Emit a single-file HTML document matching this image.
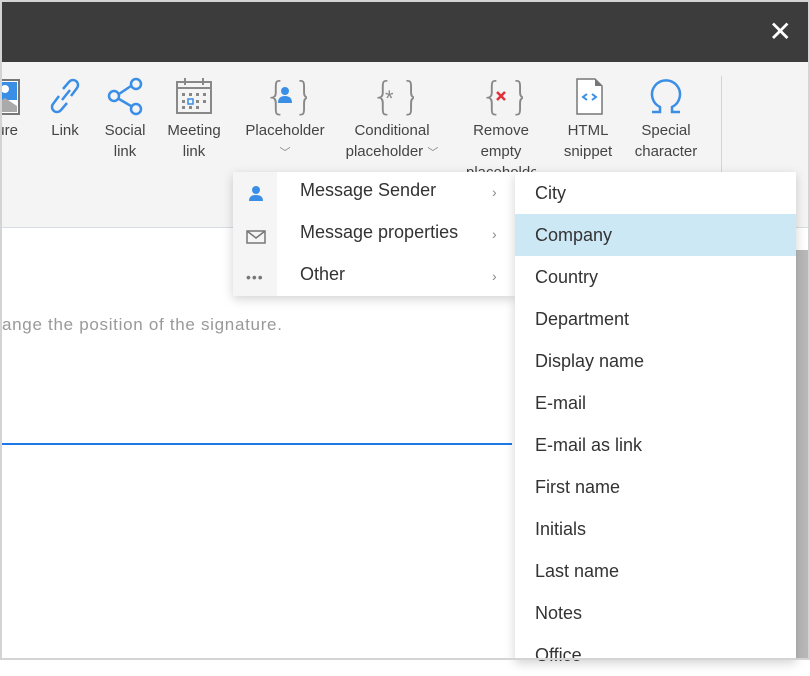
<!DOCTYPE html>
<html><head><style>
*{margin:0;padding:0;box-sizing:border-box}
body{width:810px;height:660px;overflow:hidden;background:#fff;font-family:"Segoe UI","Liberation Sans",sans-serif;position:relative}
.frame{position:absolute;inset:0;border:2px solid #d4d4d4;z-index:50;pointer-events:none}
.hdr{position:absolute;left:0;top:0;width:810px;height:62px;background:#3c3c3c}
.x{position:absolute;right:18px;top:15px;color:#fff;font-size:28px;font-weight:bold;font-family:"DejaVu Sans",sans-serif}
.tb{position:absolute;left:0;top:62px;width:810px;height:166px;background:#f4f4f4;border-bottom:1px solid #d8dde3}
.b{position:absolute;top:0;text-align:center;font-size:15px;color:#444;line-height:21px}
.b svg{display:block;margin:14px auto 4px}
.sep{position:absolute;left:721px;top:14px;width:1px;height:160px;background:#d0d6de}
.txt{position:absolute;left:2px;top:315px;font-size:17px;letter-spacing:0.7px;color:#999}
.line{position:absolute;left:2px;top:443px;width:510px;height:2px;background:#1e78e6}
.m1{position:absolute;left:233px;top:172px;width:282px;height:124px;background:#fff;box-shadow:0 3px 10px rgba(0,0,0,.18)}
.m1 .ic{position:absolute;left:0;top:0;width:44px;height:124px;background:#f5f5f5}
.it{position:absolute;left:67px;font-size:18px;color:#333}
.ar{position:absolute;left:259px;font-size:14px;color:#888}
.m2{position:absolute;left:515px;top:172px;width:281px;height:488px;background:#fff;box-shadow:0 3px 10px rgba(0,0,0,.18)}
.m2 div{height:42px;line-height:42px;padding-left:20px;font-size:18px;color:#333}
.sb{position:absolute;left:796px;top:250px;width:12px;height:410px;background:#b8b8b8}
.br{font-family:"DejaVu Sans",sans-serif;font-weight:200}
</style></head><body>
<div class="hdr"><div class="x">✕</div></div>
<div class="tb">
 <div class="b" style="left:-20px;width:50px"><svg width="40" height="40"><rect x="6" y="4" width="28" height="34" fill="#fff" stroke="#777" stroke-width="2"/><rect x="8" y="6" width="24" height="18" fill="#3a8ee6"/><circle cx="20" cy="13" r="4" fill="#fff"/><path d="M8 30 L20 22 L32 30 V36 H8Z" fill="#aaa"/></svg>ture</div>
 <div class="b" style="left:42px;width:46px"><svg width="40" height="40" fill="none" stroke="#3a8ee6" stroke-width="2.5"><path d="M17 24 L25 14 M14 20 L8 28 a5 5 0 0 0 8 6 L22 27 M26 20 L32 12 a5 5 0 0 0 -8 -6 L18 13"/></svg>Link</div>
 <div class="b" style="left:100px;width:50px"><svg width="40" height="40" fill="none" stroke="#3a8ee6" stroke-width="2.5"><circle cx="31" cy="8" r="5"/><circle cx="9" cy="20" r="5"/><circle cx="31" cy="33" r="5"/><path d="M14 18 L26 10 M14 23 L26 30"/></svg>Social<br>link</div>
 <div class="b" style="left:162px;width:64px"><svg width="40" height="40" fill="none" stroke="#888" stroke-width="2"><rect x="3" y="6" width="34" height="31"/><path d="M3 12 H37 M11 2 V9 M29 2 V9"/><g fill="#888" stroke="none"><rect x="8" y="17" width="3" height="3"/><rect x="15" y="17" width="3" height="3"/><rect x="22" y="17" width="3" height="3"/><rect x="29" y="17" width="3" height="3"/><rect x="8" y="24" width="3" height="3"/><rect x="22" y="24" width="3" height="3"/><rect x="29" y="24" width="3" height="3"/><rect x="8" y="30" width="3" height="3"/><rect x="15" y="30" width="3" height="3"/><rect x="22" y="30" width="3" height="3"/></g><rect x="14" y="23" width="5" height="5" stroke="#3a8ee6" stroke-width="1.5"/></svg>Meeting<br>link</div>
 <div class="b" style="left:238px;width:94px"><svg width="44" height="40"><text class="br" x="1" y="33" font-size="38" fill="#888">{</text><text class="br" x="30" y="33" font-size="38" fill="#888">}</text><circle cx="22" cy="15" r="4" fill="#3a8ee6"/><path d="M15 27 Q15 20 22 20 Q29 20 29 27Z" fill="#3a8ee6"/></svg>Placeholder<br><span style="font-size:11px;color:#888">﹀</span></div>
 <div class="b" style="left:340px;width:104px"><svg width="44" height="40"><text class="br" x="1" y="33" font-size="38" fill="#888">{</text><text class="br" x="30" y="33" font-size="38" fill="#888">}</text><text x="15" y="30" font-size="22" fill="#888" font-family="Liberation Sans">*</text></svg>Conditional<br>placeholder <span style="font-size:11px;color:#888">﹀</span></div>
 <div class="b" style="left:466px;width:70px;height:113px;overflow:hidden"><svg width="44" height="40"><text class="br" x="1" y="33" font-size="38" fill="#888">{</text><text class="br" x="30" y="33" font-size="38" fill="#888">}</text><path d="M18 16 L26 24 M26 16 L18 24" stroke="#e0303a" stroke-width="2.5"/></svg>Remove<br>empty<br>placeholders</div>
 <div class="b" style="left:556px;width:64px"><svg width="40" height="40"><path d="M9 3 H27 L34 10 V38 H9Z" fill="#fff" stroke="#777" stroke-width="1.5"/><path d="M27 3 V10 H34Z" fill="#777"/><path d="M19 18 L15 21 L19 24 M24 18 L28 21 L24 24" stroke="#3a8ee6" stroke-width="2" fill="none"/></svg>HTML<br>snippet</div>
 <div class="b" style="left:628px;width:76px"><svg width="40" height="40"><path d="M6 36 H14 V31 A14 14 0 1 1 26 31 V36 H34" fill="none" stroke="#3a8ee6" stroke-width="2.5"/></svg>Special<br>character</div>
 <div class="sep"></div>
</div>
<div class="txt">ange the position of the signature.</div>
<div class="line"></div>
<div class="sb"></div>
<div class="m1"><div class="ic"></div>
 <svg style="position:absolute;left:14px;top:12px" width="18" height="18"><circle cx="9" cy="6" r="4" fill="#3a8ee6"/><path d="M2 17 Q2 11 9 11 Q16 11 16 17Z" fill="#3a8ee6"/></svg>
 <svg style="position:absolute;left:13px;top:57px" width="20" height="16" fill="none" stroke="#777" stroke-width="1.5"><rect x="1" y="2" width="18" height="12"/><path d="M1 2 L10 9 L19 2"/></svg>
 <div style="position:absolute;left:13px;top:97px;font-size:14px;color:#777;letter-spacing:1px">•••</div>
 <div class="it" style="top:8px">Message Sender</div><div class="ar" style="top:12px">›</div>
 <div class="it" style="top:50px">Message properties</div><div class="ar" style="top:54px">›</div>
 <div class="it" style="top:92px">Other</div><div class="ar" style="top:96px">›</div>
</div>
<div class="m2">
 <div>City</div><div style="background:#cde8f5">Company</div><div>Country</div><div>Department</div><div>Display name</div><div>E-mail</div><div>E-mail as link</div><div>First name</div><div>Initials</div><div>Last name</div><div>Notes</div><div>Office</div>
</div>
<div class="frame"></div>
</body></html>
